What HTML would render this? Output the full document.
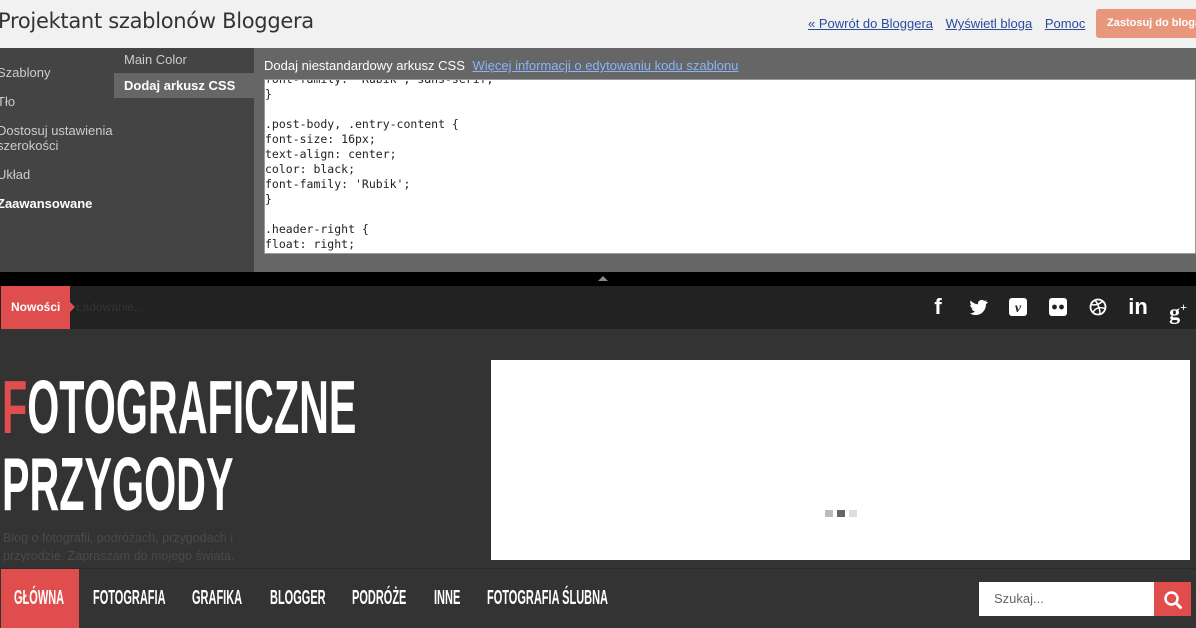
<!DOCTYPE html>
<html><head><meta charset="utf-8"><style>
*{margin:0;padding:0;box-sizing:border-box}
body{width:1196px;height:628px;overflow:hidden;font-family:"Liberation Sans",sans-serif;background:#333;position:relative}
.a{position:absolute}
.n{font-family:"Liberation Sans Narrow","Liberation Sans",sans-serif}
.cond{display:inline-block;transform-origin:0 0;white-space:nowrap}
a{color:#2a4c9c;text-decoration:underline}
</style></head><body>
<div class="a" style="left:0;top:0;width:1196px;height:48px;background:#f1f1f1"></div>
<div class="a" style="left:-2px;top:9px;font-size:21px;color:#333;font-family:'DejaVu Sans',sans-serif;letter-spacing:-0.3px">Projektant szablonów Bloggera</div>
<div class="a" style="left:808px;top:16px;font-size:13px;color:#2a4c9c"><a style="margin-right:9px">« Powrót do Bloggera</a> <a style="margin-right:9px">Wyświetl bloga</a> <a>Pomoc</a></div>
<div class="a" style="left:1096px;top:9px;width:110px;height:29px;background:#e8967c;border-radius:3px;color:#fff;font-weight:bold;font-size:11px;line-height:29px;padding-left:11px">Zastosuj do bloga</div>

<div class="a" style="left:0;top:48px;width:254px;height:224px;background:#444"></div>
<div class="a n" style="left:0;top:65px;font-size:13px;color:#ccc;line-height:15px">
<div style="margin-left:-3px">Szablony</div>
<div style="margin-top:14px;margin-left:-3px">Tło</div>
<div style="margin-top:14px;margin-left:-3px">Dostosuj ustawienia<br>szerokości</div>
<div style="margin-top:14px;margin-left:-3px">Układ</div>
<div style="margin-top:14px;margin-left:-3px;color:#fff;font-weight:bold">Zaawansowane</div>
</div>
<div class="a n" style="left:124px;top:52px;font-size:13px;color:#ccc">Main Color</div>
<div class="a n" style="left:114px;top:73px;width:140px;height:25px;background:#666;color:#fff;font-weight:bold;font-size:13px;line-height:25px;padding-left:10px">Dodaj arkusz CSS</div>
<div class="a" style="left:254px;top:48px;width:942px;height:224px;background:#666"></div>
<div class="a n" style="left:264px;top:58px;font-size:13px;color:#fff">Dodaj niestandardowy arkusz CSS <span style="color:#8ab4f8;text-decoration:underline;margin-left:4px">Więcej informacji o edytowaniu kodu szablonu</span></div>
<div class="a" style="left:264px;top:79px;width:932px;height:175px;background:#fff;border:1px solid #999;overflow:hidden">
<pre style="font-family:'DejaVu Sans Mono',monospace;font-size:11.5px;line-height:15px;color:#222;margin-top:-8px;padding-left:0">font-family: 'Rubik', sans-serif;
}

.post-body, .entry-content {
font-size: 16px;
text-align: center;
color: black;
font-family: 'Rubik';
}

.header-right {
float: right;
padding: 0;</pre></div>
<div class="a" style="left:0;top:272px;width:1196px;height:14px;background:#000"></div>
<div class="a" style="left:598px;top:276px;border:5px solid transparent;border-bottom-color:#888;border-top:0;width:0;height:0"></div>

<div class="a" style="left:0;top:286px;width:1196px;height:43px;background:#222"></div>
<div class="a" style="left:1px;top:286px;width:69px;height:43px;background:#e04d4d;color:#fff;font-weight:bold;font-size:12px;line-height:43px;padding-left:10px">Nowości</div>
<div class="a" style="left:70px;top:302px;border-left:5px solid #e04d4d;border-top:5px solid transparent;border-bottom:5px solid transparent"></div>
<div class="a" style="left:76px;top:300px;font-size:12px;color:#333">Ładowanie...</div>
<div class="a" style="left:918px;top:295px;color:#fff;font-size:22px;font-weight:bold;display:flex;line-height:24px">
<span style="width:40px;text-align:center">f</span>
<svg width="40" height="24" viewBox="0 0 40 24"><path d="M29 6.5c-.7.3-1.4.5-2.1.6.8-.5 1.3-1.2 1.6-2-.7.4-1.5.7-2.3.9a3.6 3.6 0 0 0-6.1 3.3c-3-.2-5.6-1.600-7.400-3.800-1 1.700-.4 3.800 1.100 4.800-.6 0-1.100-.2-1.600-.4 0 1.700 1.200 3.200 2.900 3.600-.5.100-1.100.200-1.600.100.500 1.400 1.800 2.500 3.400 2.500A7.300 7.300 0 0 1 12 18.500c1.600 1 3.500 1.600 5.600 1.600 6.700 0 10.500-5.700 10.300-10.800.7-.5 1.300-1.100 1.800-1.800z" fill="#fff"/></svg>
<svg width="40" height="24" viewBox="0 0 40 24"><rect x="11" y="3" width="18" height="18" rx="3" fill="#fff"/><text x="20" y="17" font-size="14" font-style="italic" font-weight="bold" fill="#222" text-anchor="middle" font-family="Liberation Serif">v</text></svg>
<svg width="40" height="24" viewBox="0 0 40 24"><rect x="11" y="3" width="18" height="18" rx="3" fill="#fff"/><circle cx="16.5" cy="12" r="2.4" fill="#222"/><circle cx="23.5" cy="12" r="2.4" fill="#222"/></svg>
<svg width="40" height="24" viewBox="0 0 40 24"><circle cx="20" cy="12" r="7.5" fill="none" stroke="#fff" stroke-width="1.8"/><path d="M13 9.5c4 1 9 0 12-4M15 17.5c2-4 6-6 12-4M17 5c3 4 5 9 5 14" fill="none" stroke="#fff" stroke-width="1.5"/></svg>
<span style="width:40px;text-align:center">in</span>
<span style="width:40px;text-align:center;font-family:'Liberation Serif'">g<sup style="font-size:12px">+</sup></span>
</div>

<div class="a n" style="left:2px;top:369px;color:#fff;font-weight:bold;font-size:75px;line-height:77px"><span class="cond" style="transform:scaleX(0.55)"><span style="color:#e04d4d">F</span>OTOGRAFICZNE<br>PRZYGODY</span></div>
<div class="a" style="left:3px;top:529px;font-size:12.5px;line-height:18px;color:#4a4a4a">Blog o fotografii, podróżach, przygodach i<br>przyrodzie. Zapraszam do mojego świata.</div>
<div class="a" style="left:491px;top:360px;width:699px;height:200px;background:#fff"></div>
<div class="a" style="left:825px;top:510px;width:8px;height:7px;background:#bbb"></div>
<div class="a" style="left:837px;top:510px;width:8px;height:7px;background:#666"></div>
<div class="a" style="left:849px;top:510px;width:8px;height:7px;background:#ddd"></div>

<div class="a" style="left:0;top:568px;width:1196px;height:1px;background:#2a2a2a"></div>
<div class="a" style="left:1px;top:569px;width:78px;height:59px;background:#e04d4d"></div>
<div class="a n" style="left:0;top:587px;width:700px;height:30px;color:#fff;font-weight:bold;font-size:20px;white-space:nowrap">
<span class="a cond" style="left:14px;transform:scaleX(.55)">GŁÓWNA</span>
<span class="a cond" style="left:93px;transform:scaleX(.55)">FOTOGRAFIA</span>
<span class="a cond" style="left:192px;transform:scaleX(.55)">GRAFIKA</span>
<span class="a cond" style="left:270px;transform:scaleX(.55)">BLOGGER</span>
<span class="a cond" style="left:352px;transform:scaleX(.55)">PODRÓŻE</span>
<span class="a cond" style="left:434px;transform:scaleX(.55)">INNE</span>
<span class="a cond" style="left:487px;transform:scaleX(.55)">FOTOGRAFIA ŚLUBNA</span>
</div>
<div class="a" style="left:979px;top:582px;width:175px;height:34px;background:#fff;font-size:13px;color:#666;line-height:34px;padding-left:15px">Szukaj...</div>
<div class="a" style="left:1154px;top:582px;width:37px;height:34px;background:#e04d4d"></div>
<svg class="a" style="left:1161px;top:588px" width="24" height="24" viewBox="0 0 24 24"><circle cx="10.5" cy="10.5" r="6" fill="none" stroke="#fff" stroke-width="2.5"/><path d="M15 15l4.5 4.5" stroke="#fff" stroke-width="3" stroke-linecap="round"/></svg>
</body></html>
